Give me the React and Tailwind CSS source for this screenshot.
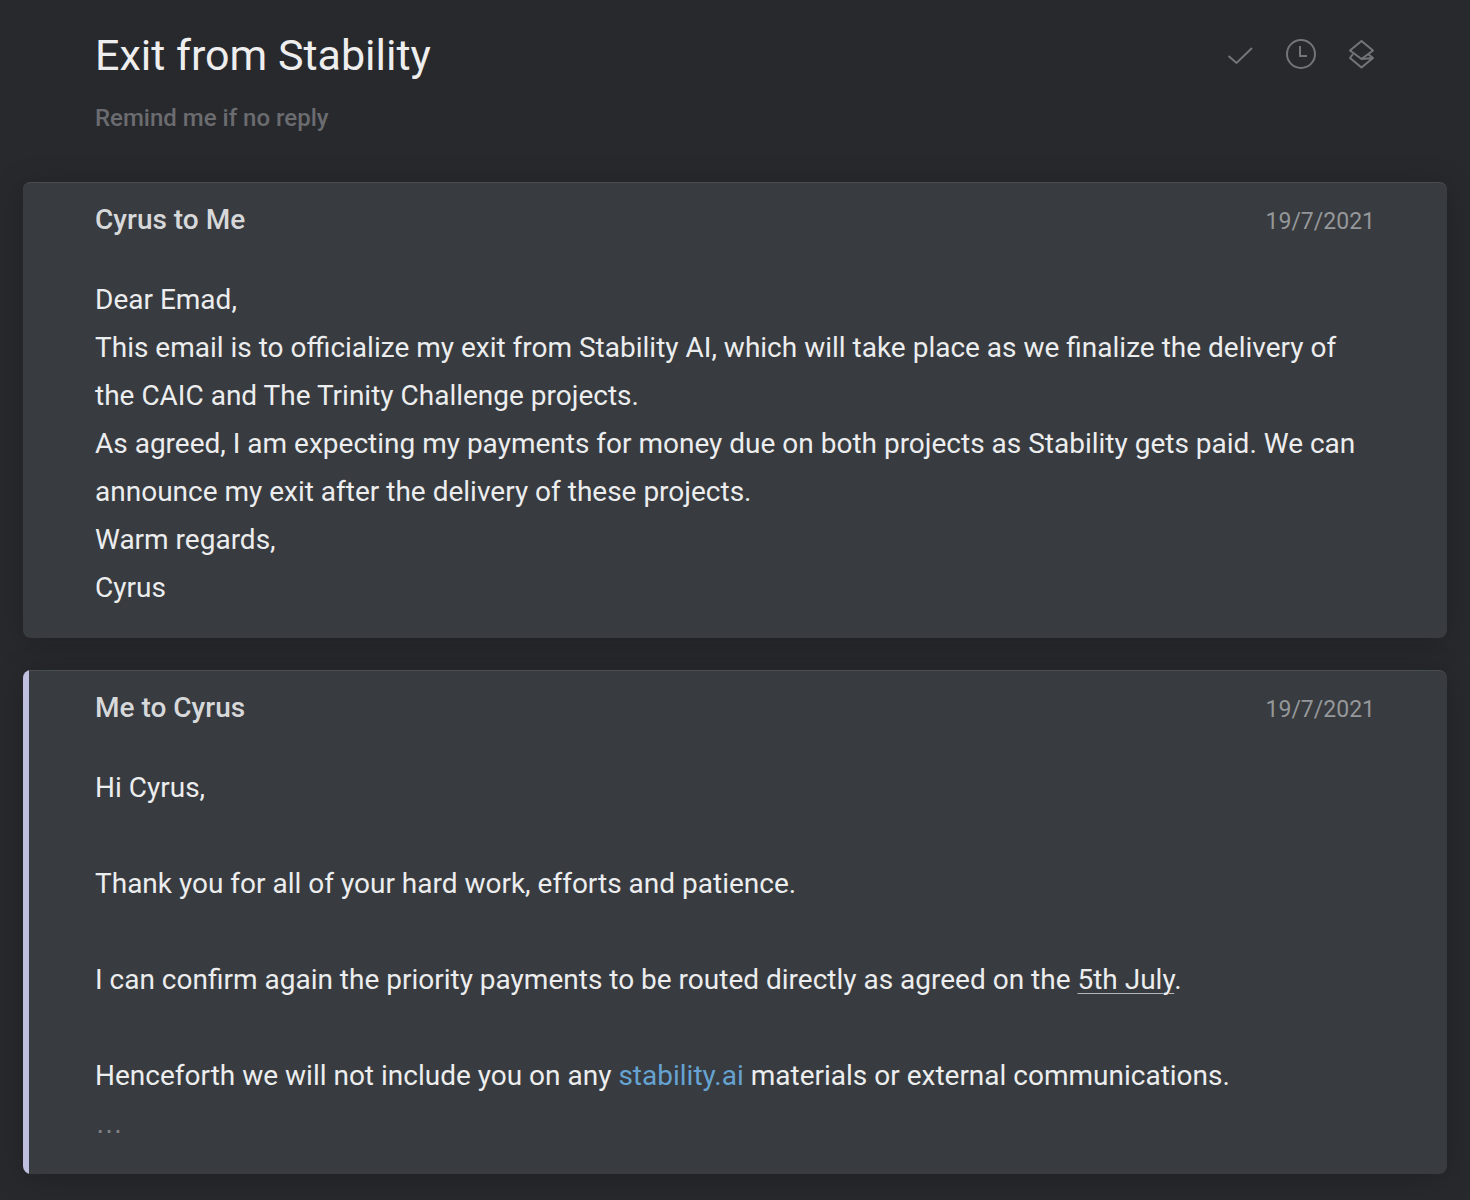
import React from "react";

const HeaderIcons = () => (
  <div className="flex items-center gap-7 pt-[9px] text-[#737578]">
    {/* Done */}
    <button type="button" aria-label="Mark done" className="cursor-pointer">
      <svg width="32" height="32" viewBox="0 0 32 32" fill="none" stroke="currentColor" strokeWidth="2">
        <path d="M3.5 18 L11.5 25 L27 10" />
      </svg>
    </button>

    {/* Reminder */}
    <button type="button" aria-label="Remind me" className="cursor-pointer">
      <svg width="32" height="32" viewBox="0 0 32 32" fill="none" stroke="currentColor" strokeWidth="2">
        <circle cx="16" cy="16" r="14" />
        <path d="M15 8 V18 H22" />
      </svg>
    </button>

    {/* Stacked squares */}
    <button type="button" aria-label="Move" className="cursor-pointer">
      <svg width="30" height="32" viewBox="-2 0 30 32" fill="none" stroke="currentColor" strokeWidth="2" strokeLinejoin="round">
        <path d="M14.5 3 L26 12.5 L14.5 21 L3 12.5 Z" />
        <path d="M6 16 L3 20 L14.5 29.5 L26 20 L14.5 21" />
        <path d="M21 16 L26 20" />
      </svg>
    </button>
  </div>
);

const Message = ({ title, date, mine, children }) => (
  <article
    className={
      mine
        ? "flex overflow-hidden rounded-lg bg-[#383b3f] shadow-[0_4px_32px_rgba(0,0,0,0.2)]"
        : "flex rounded-lg bg-[#383b3f] shadow-[0_4px_32px_rgba(0,0,0,0.2)]"
    }
  >
    {/* Accent bar on my own messages */}
    {mine && <div className="w-1.5 shrink-0 bg-[#bfc0e0]" />}

    <div
      className={
        mine
          ? "flex-1 rounded-r-lg border-t border-[#4a4d51] pt-[13px] pr-18 pb-[26px] pl-[66px]"
          : "flex-1 rounded-lg border-t border-[#4a4d51] px-18 pt-[13px] pb-[26px]"
      }
    >
      <header className="flex items-baseline justify-between">
        <h2 className="text-[28px] leading-12 font-medium text-[#d7d8da]">{title}</h2>
        <time className="text-[23px] leading-12 text-[#95979a]">{date}</time>
      </header>
      <div className="mt-[30px] text-[28px] leading-12 text-[#ecedee]">{children}</div>
    </div>
  </article>
);

export default function App() {
  return (
    <main className="min-h-screen bg-[#28292d] px-[23px] pb-[26px] font-['Roboto','Liberation_Sans',sans-serif]">
      {/* Thread header */}
      <header className="px-18 pt-[29px]">
        <div className="flex items-start justify-between">
          <h1 className="text-[43px] leading-[52px] text-[#eeeeef]">Exit from Stability</h1>
          <HeaderIcons />
        </div>
        <button type="button" className="mt-[19px] mb-[46px] block cursor-pointer text-2xl leading-9 font-medium text-[#6b6c70]">
          Remind me if no reply
        </button>
      </header>

      {/* Messages */}
      <div className="flex flex-col gap-8">
        <Message title="Cyrus to Me" date="19/7/2021">
          <p>Dear Emad,</p>
          <p>
            This email is to officialize my exit from Stability AI, which will take place as we finalize the delivery of
            the CAIC and The Trinity Challenge projects.
          </p>
          <p>
            As agreed, I am expecting my payments for money due on both projects as Stability gets paid. We can
            announce my exit after the delivery of these projects.
          </p>
          <p>Warm regards,</p>
          <p>Cyrus</p>
        </Message>

        <Message title="Me to Cyrus" date="19/7/2021" mine>
          <div className="flex flex-col gap-12">
            <p>Hi Cyrus,</p>
            <p>Thank you for all of your hard work, efforts and patience.</p>
            <p>
              I can confirm again the priority payments to be routed directly as agreed on the{" "}
              <a href="#date" className="underline decoration-[#b4b6b9] decoration-1 underline-offset-4">5th July</a>.
            </p>
            <p>
              Henceforth we will not include you on any{" "}
              <a href="#stability" className="text-[#66a3d2]">stability.ai</a> materials or external communications.
            </p>
          </div>
          <button
            type="button"
            aria-label="Show trimmed content"
            className="block cursor-pointer font-['Liberation_Sans',sans-serif] text-[#808286]"
          >
            …
          </button>
        </Message>
      </div>
    </main>
  );
}
